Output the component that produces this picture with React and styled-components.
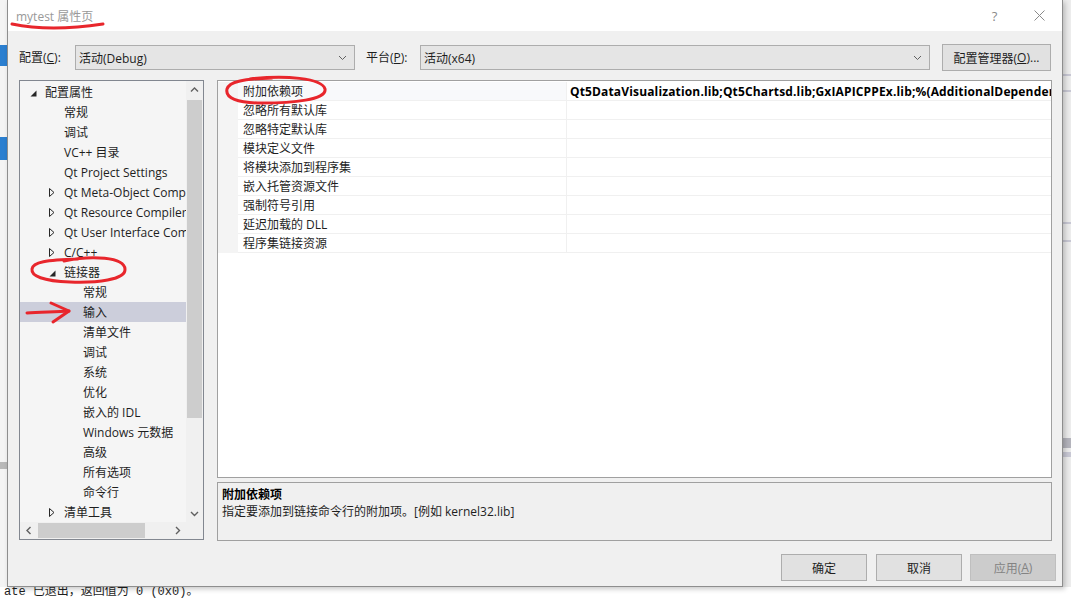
import React from "react";
import styled, { createGlobalStyle } from "styled-components";

const GlobalStyle = createGlobalStyle`
  html, body {
    margin: 0;
    padding: 0;
  }
  body {
    width: 1071px;
    height: 600px;
    overflow: hidden;
    background: #fafafa;
    font-family: "Open Sans", "Noto Sans CJK SC", sans-serif;
    font-size: 12px;
    color: #1e1e1e;
  }
`;

const treeItems = [
  { label: "配置属性", level: 0, arrow: "open" },
  { label: "常规", level: 1 },
  { label: "调试", level: 1 },
  { label: "VC++ 目录", level: 1 },
  { label: "Qt Project Settings", level: 1 },
  { label: "Qt Meta-Object Compiler", level: 1, arrow: "closed" },
  { label: "Qt Resource Compiler", level: 1, arrow: "closed" },
  { label: "Qt User Interface Compiler", level: 1, arrow: "closed" },
  { label: "C/C++", level: 1, arrow: "closed" },
  { label: "链接器", level: 1, arrow: "open" },
  { label: "常规", level: 2 },
  { label: "输入", level: 2, selected: true },
  { label: "清单文件", level: 2 },
  { label: "调试", level: 2 },
  { label: "系统", level: 2 },
  { label: "优化", level: 2 },
  { label: "嵌入的 IDL", level: 2 },
  { label: "Windows 元数据", level: 2 },
  { label: "高级", level: 2 },
  { label: "所有选项", level: 2 },
  { label: "命令行", level: 2 },
  { label: "清单工具", level: 1, arrow: "closed" },
];

const props = [
  {
    name: "附加依赖项",
    value: "Qt5DataVisualization.lib;Qt5Chartsd.lib;GxIAPICPPEx.lib;%(AdditionalDependencies)",
  },
  { name: "忽略所有默认库" },
  { name: "忽略特定默认库" },
  { name: "模块定义文件" },
  { name: "将模块添加到程序集" },
  { name: "嵌入托管资源文件" },
  { name: "强制符号引用" },
  { name: "延迟加载的 DLL" },
  { name: "程序集链接资源" },
];

const arrowPaths = {
  down: "M1 1 L4.5 4.5 L8 1",
  up: "M1 4.5 L4.5 1 L8 4.5",
  left: "M4.5 1 L1 4.5 L4.5 8",
  right: "M1 1 L4.5 4.5 L1 8",
};

const Chevron = ({ dir = "down", weight = 1 }) => {
  const wide = dir === "down" || dir === "up";
  return (
    <svg width={wide ? 9 : 6} height={wide ? 6 : 9} viewBox={wide ? "0 0 9 6" : "0 0 6 9"}>
      <path d={arrowPaths[dir]} fill="none" stroke="#606060" strokeWidth={weight} />
    </svg>
  );
};

const TreeArrow = ({ kind }) =>
  kind === "open" ? (
    <svg width="7" height="7" viewBox="0 0 7 7">
      <polygon points="6.5,0.5 6.5,6.5 0.5,6.5" fill="#262626" />
    </svg>
  ) : (
    <svg width="6" height="9" viewBox="0 0 6 9">
      <polygon points="0.5,0.5 5,4.5 0.5,8.5" fill="none" stroke="#262626" strokeWidth="1" />
    </svg>
  );

const Page = styled.div`
  position: relative;
  width: 1071px;
  height: 600px;
  display: flex;
  flex-direction: column;
  overflow: hidden;
`;

const Stage = styled.div`
  display: flex;
  height: 587px;
`;

const SideStrip = styled.div`
  width: ${(p) => p.$w}px;
  background: ${(p) => p.$bg};
  display: flex;
  flex-direction: column;
  flex-shrink: 0;
`;

const StripBlock = styled.div`
  height: ${(p) => p.$h}px;
  background: ${(p) => p.$c || "transparent"};
  flex-shrink: 0;
`;

const Dialog = styled.div`
  position: relative;
  z-index: 1;
  width: 1056px;
  flex-shrink: 0;
  box-sizing: border-box;
  border: 1px solid #8e8e8e;
  border-top: none;
  background: #f0f0f0;
  display: flex;
  flex-direction: column;
  box-shadow: 2px 2px 5px rgba(0, 0, 0, 0.22);
`;

const TitleBar = styled.div`
  height: 31px;
  background: #fff;
  display: flex;
  align-items: center;
  padding-left: 8px;
  flex-shrink: 0;
`;

const Title = styled.div`
  color: #999;
  font-size: 12px;
  margin-top: 1px;
`;

const CaptionButton = styled.div`
  width: 45px;
  height: 31px;
  display: flex;
  align-items: center;
  justify-content: center;
  color: #8a8a8a;
  font-size: 13px;
  margin-left: ${(p) => (p.$first ? "auto" : "0")};
`;

const Body = styled.div`
  flex: 1;
  display: flex;
  flex-direction: column;
  padding: 13px 10px 6px 11px;
`;

const ConfigRow = styled.div`
  display: flex;
  align-items: center;
  height: 27px;
`;

const Label = styled.div`
  width: ${(p) => p.$w}px;
  margin-left: ${(p) => p.$ml || 0}px;
  flex-shrink: 0;
  line-height: 25px;
`;

const Combo = styled.div`
  width: ${(p) => p.$w}px;
  height: 25px;
  box-sizing: border-box;
  border: 1px solid #adadad;
  background: #e5e5e5;
  display: flex;
  align-items: center;
  padding: 0 7px 0 3px;
  flex-shrink: 0;
  span {
    flex: 1;
  }
`;

const Button = styled.div`
  width: ${(p) => p.$w || 86}px;
  height: 27px;
  margin-left: ${(p) => p.$ml || 0}px;
  box-sizing: border-box;
  border: 1px solid ${(p) => (p.$disabled ? "#bfbfbf" : "#adadad")};
  background: ${(p) => (p.$disabled ? "#cccccc" : "#e1e1e1")};
  color: ${(p) => (p.$disabled ? "#838383" : "#1e1e1e")};
  display: flex;
  align-items: center;
  justify-content: center;
  flex-shrink: 0;
`;

const Main = styled.div`
  margin-top: 9px;
  height: 461px;
  display: grid;
  grid-template-columns: 185px 1fr;
  column-gap: 13px;
`;

const TreeBox = styled.div`
  box-sizing: border-box;
  height: 460px;
  border: 1px solid #828790;
  display: grid;
  grid-template-columns: 1fr 17px;
  grid-template-rows: 1fr 17px;
  background: #f0f0f0;
`;

const TreeList = styled.div`
  background: #f5f5f5;
  padding-top: 1px;
  overflow: hidden;
`;

const TreeRow = styled.div`
  height: 20px;
  display: flex;
  align-items: center;
  white-space: nowrap;
  padding-left: ${(p) => 10 + p.$level * 19}px;
  background: ${(p) => (p.$selected ? "#cccedb" : "transparent")};
`;

const ArrowBox = styled.div`
  width: 15px;
  flex-shrink: 0;
  display: flex;
  align-items: center;
  padding-top: ${(p) => (p.$kind === "open" ? 2 : 1)}px;
`;

const VScroll = styled.div`
  display: flex;
  flex-direction: column;
  align-items: center;
  background: #f0f0f0;
`;

const HScroll = styled.div`
  display: flex;
  align-items: center;
  background: #f0f0f0;
`;

const ScrollArrow = styled.div`
  width: 17px;
  height: 17px;
  display: flex;
  align-items: center;
  justify-content: center;
  flex-shrink: 0;
`;

const VThumb = styled.div`
  width: 15px;
  height: 318px;
  margin-top: 2px;
  background: #cdcdcd;
`;

const HThumb = styled.div`
  height: 15px;
  width: 107px;
  margin-left: 1px;
  background: #cdcdcd;
`;

const Spacer = styled.div`
  flex: 1;
`;

const Corner = styled.div`
  background: #f0f0f0;
`;

const RightCol = styled.div`
  display: grid;
  grid-template-rows: 398px 59px;
  row-gap: 4px;
`;

const Grid = styled.div`
  box-sizing: border-box;
  border: 1px solid #a0a0a0;
  padding-top: 1px;
  background: #fff;
  overflow: hidden;
`;

const PropRow = styled.div`
  display: grid;
  grid-template-columns: 20px 328px 1fr;
  height: 19px;
`;

const Gutter = styled.div`
  background: #f4f4f4;
`;

const Cell = styled.div`
  box-sizing: border-box;
  height: 19px;
  border-bottom: 1px solid #f0f0f0;
  border-left: ${(p) => (p.$value ? "1px solid #f0f0f0" : "none")};
  padding-left: ${(p) => (p.$value ? 3 : 5)}px;
  line-height: 19px;
  white-space: nowrap;
  overflow: hidden;
  letter-spacing: ${(p) => (p.$value ? "0.15px" : "0")};
  font-weight: ${(p) => (p.$value ? 700 : 400)};
  color: ${(p) => (p.$value ? "#000" : "#1e1e1e")};
  background: ${(p) => (p.$active ? "#f8f9fb" : "transparent")};
`;

const Desc = styled.div`
  box-sizing: border-box;
  border: 1px solid #a0a0a0;
  background: #f0f0f0;
  padding: 3px 4px;
  line-height: 17px;
`;

const DescTitle = styled.div`
  font-weight: 700;
  color: #000;
`;

const Footer = styled.div`
  margin-top: 13px;
  margin-right: -4px;
  display: flex;
  justify-content: flex-end;
`;

const BottomStrip = styled.div`
  height: 13px;
  background: #fff;
  overflow: hidden;
  padding-left: 4px;
  font-family: "Liberation Mono", "Noto Sans CJK SC", monospace;
  font-size: 12px;
  line-height: 10px;
  color: #1e1e1e;
  white-space: nowrap;
`;

const Overlay = styled.svg`
  position: absolute;
  left: 0;
  top: 0;
  z-index: 5;
  pointer-events: none;
`;

const Marks = () => (
  <Overlay width="1071" height="600" viewBox="0 0 1071 600">
    <g fill="none" stroke="#e8262c" strokeWidth="3" strokeLinecap="round" strokeLinejoin="round">
      <path d="M12 24 Q50 32 103 24" />
      <path d="M250 79 C285 75 322 78 325 89 C327 100 292 103 262 103 C237 103 225 98 227 89 C229 82 242 79 272 78" />
      <path d="M64 261 C92 255 124 257 125 269 C126 280 96 283 70 282 C43 281 31 276 32 269 C33 262 46 260 78 259" />
      <path d="M27 313 C40 312 55 312 69 311" />
      <path d="M51 303 L69 311 L53 322" />
    </g>
  </Overlay>
);

export default function App() {
  return (
    <Page>
      <GlobalStyle />
      <Stage>
        <SideStrip $w={7} $bg="#f4f4f4">
          <StripBlock $h={45} />
          <StripBlock $h={21} $c="#2b7fd0" />
          <StripBlock $h={71} />
          <StripBlock $h={23} $c="#2b7fd0" />
          <StripBlock $h={302} />
          <StripBlock $h={7} $c="#b9b9b9" />
        </SideStrip>
        <Dialog>
          <TitleBar>
            <Title>mytest 属性页</Title>
            <CaptionButton $first>?</CaptionButton>
            <CaptionButton>
              <svg width="11" height="11" viewBox="0 0 11 11">
                <path d="M0.5 0.5 L10.5 10.5 M10.5 0.5 L0.5 10.5" stroke="#8a8a8a" strokeWidth="1" />
              </svg>
            </CaptionButton>
          </TitleBar>
          <Body>
            <ConfigRow>
              <Label $w={56}>
                配置(<u>C</u>):
              </Label>
              <Combo $w={280}>
                <span>活动(Debug)</span>
                <Chevron />
              </Combo>
              <Label $w={54} $ml={11}>
                平台(<u>P</u>):
              </Label>
              <Combo $w={510}>
                <span>活动(x64)</span>
                <Chevron />
              </Combo>
              <Button $w={109} $ml={12}>
                配置管理器(<u>O</u>)...
              </Button>
            </ConfigRow>
            <Main>
              <TreeBox>
                <TreeList>
                  {treeItems.map((item, i) => (
                    <TreeRow key={i} $level={item.level} $selected={item.selected}>
                      <ArrowBox $kind={item.arrow}>{item.arrow && <TreeArrow kind={item.arrow} />}</ArrowBox>
                      <span>{item.label}</span>
                    </TreeRow>
                  ))}
                </TreeList>
                <VScroll>
                  <ScrollArrow>
                    <Chevron dir="up" weight={1.4} />
                  </ScrollArrow>
                  <VThumb />
                  <Spacer />
                  <ScrollArrow>
                    <Chevron dir="down" weight={1.4} />
                  </ScrollArrow>
                </VScroll>
                <HScroll>
                  <ScrollArrow>
                    <Chevron dir="left" weight={1.4} />
                  </ScrollArrow>
                  <HThumb />
                  <Spacer />
                  <ScrollArrow>
                    <Chevron dir="right" weight={1.4} />
                  </ScrollArrow>
                </HScroll>
                <Corner />
              </TreeBox>
              <RightCol>
                <Grid>
                  {props.map((p, i) => (
                    <PropRow key={i}>
                      <Gutter />
                      <Cell $active={i === 0}>{p.name}</Cell>
                      <Cell $value>{p.value || ""}</Cell>
                    </PropRow>
                  ))}
                </Grid>
                <Desc>
                  <DescTitle>附加依赖项</DescTitle>
                  <div>指定要添加到链接命令行的附加项。[例如 kernel32.lib]</div>
                </Desc>
              </RightCol>
            </Main>
            <Footer>
              <Button>确定</Button>
              <Button $ml={9}>取消</Button>
              <Button $ml={8} $disabled>
                应用(<u>A</u>)
              </Button>
            </Footer>
          </Body>
        </Dialog>
        <SideStrip $w={8} $bg="#ececec">
          <StripBlock $h={74} />
          <StripBlock $h={2} $c="#c8c8d4" />
          <StripBlock $h={14} />
          <StripBlock $h={2} $c="#c8c8d4" />
          <StripBlock $h={130} />
          <StripBlock $h={2} $c="#c8c8d4" />
          <StripBlock $h={16} />
          <StripBlock $h={2} $c="#c8c8d4" />
          <StripBlock $h={196} />
          <StripBlock $h={10} $c="#b4b4bc" />
          <StripBlock $h={4} />
          <StripBlock $h={5} $c="#c8c8d4" />
        </SideStrip>
      </Stage>
      <BottomStrip>ate 已退出，返回值为 0 (0x0)。</BottomStrip>
      <Marks />
    </Page>
  );
}
